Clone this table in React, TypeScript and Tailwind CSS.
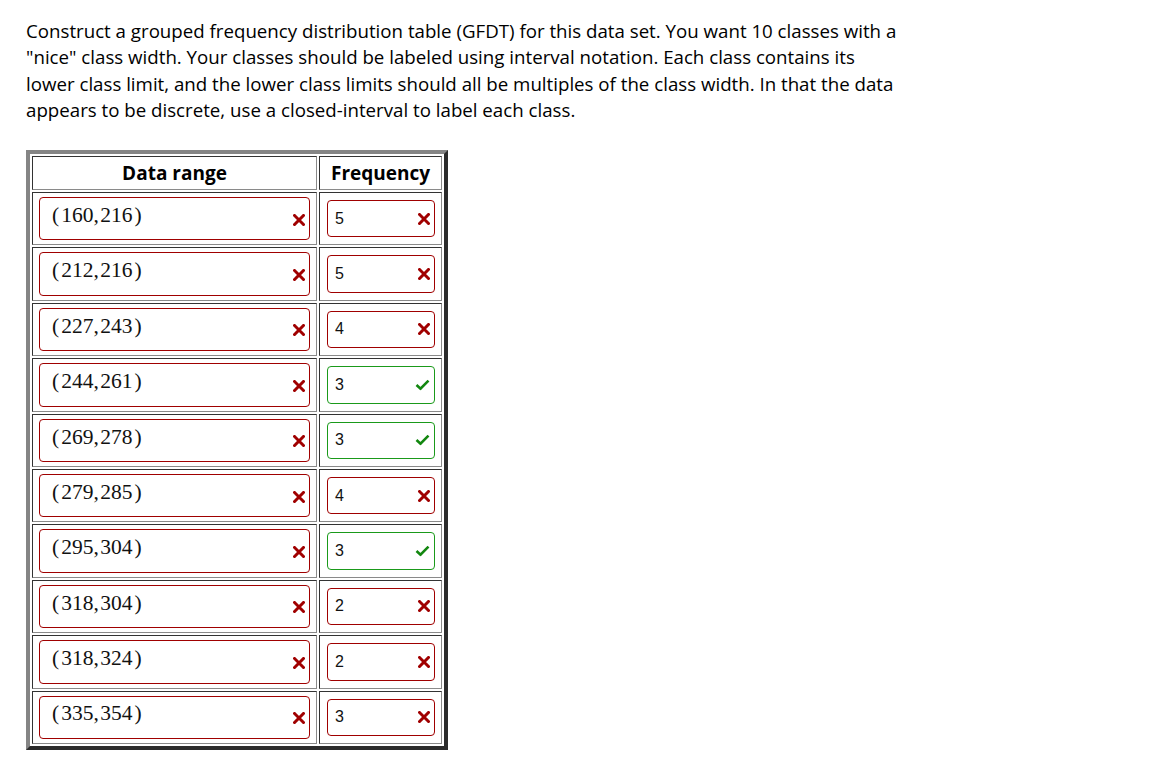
import React from "react";

type Row = { a: string; b: string; freq: string; ok: boolean };

const rows: Row[] = [
  { a: "160", b: "216", freq: "5", ok: false },
  { a: "212", b: "216", freq: "5", ok: false },
  { a: "227", b: "243", freq: "4", ok: false },
  { a: "244", b: "261", freq: "3", ok: true },
  { a: "269", b: "278", freq: "3", ok: true },
  { a: "279", b: "285", freq: "4", ok: false },
  { a: "295", b: "304", freq: "3", ok: true },
  { a: "318", b: "304", freq: "2", ok: false },
  { a: "318", b: "324", freq: "2", ok: false },
  { a: "335", b: "354", freq: "3", ok: false },
];

function XMark() {
  return (
    <svg width="12" height="12" viewBox="0 0 12 12" className="block">
      <path d="M1.5 1.5 L10.5 10.5 M10.5 1.5 L1.5 10.5" stroke="#a00000" strokeWidth="3" strokeLinecap="square" fill="none" />
    </svg>
  );
}

function Check() {
  return (
    <svg width="15" height="11" viewBox="0 0 15 11" className="block">
      <path d="M1.5 5.5 L5.5 9.2 L13.5 1.2" stroke="#12870f" strokeWidth="2.6" fill="none" />
    </svg>
  );
}

const cell =
  "border border-t-[#333333] border-l-[#333333] border-r-[#8a8a8a] border-b-[#8a8a8a] bg-white";

export default function App() {
  return (
    <div
      className="bg-white min-h-[770px] w-[1156px] pt-[18px] pl-[26px] text-black"
      style={{ fontFamily: '"Open Sans", "Liberation Sans", sans-serif' }}
    >
      <div className="text-[18.7px] leading-[26.4px]">
        <div className="whitespace-nowrap">
          Construct a grouped frequency distribution table (GFDT) for this data set. You want 10 classes with a
        </div>
        <div className="whitespace-nowrap">
          "nice" class width. Your classes should be labeled using interval notation. Each class contains its
        </div>
        <div className="whitespace-nowrap">
          lower class limit, and the lower class limits should all be multiples of the class width. In that the data
        </div>
        <div className="whitespace-nowrap">
          appears to be discrete, use a closed-interval to label each class.
        </div>
      </div>

      <div className="mt-[26.4px] w-[422px] border-[4px] border-t-[#858585] border-l-[#858585] border-r-[#2b2b2b] border-b-[#2b2b2b] p-[2px]">
        <div className="grid grid-cols-[285px_123px] grid-rows-[34px_repeat(10,53.4px)] gap-[2px]">
          <div className={`${cell} flex items-center justify-center font-bold text-[19px]`}>Data range</div>
          <div className={`${cell} flex items-center justify-center font-bold text-[19px]`}>Frequency</div>
          {rows.map((r, i) => (
            <React.Fragment key={i}>
              <div className={`${cell} flex items-center pl-[6px]`}>
                <div className="relative w-[271px] h-[43.4px] rounded-[4px] border border-[#a00000] bg-white flex items-center pl-[12px] pb-[6px]">
                  <span
                    className="text-[21.5px] leading-none text-[#111]"
                    style={{ fontFamily: '"Liberation Serif", "DejaVu Serif", serif' }}
                  >
                    <span className="mr-[2px]">(</span>
                    {r.a}
                    <span className="mr-[1.5px]">,</span>
                    {r.b}
                    <span className="ml-[2px]">)</span>
                  </span>
                  <div className="absolute right-[4px] top-1/2 -translate-y-1/2 mt-[1px]">
                    <XMark />
                  </div>
                </div>
              </div>
              <div className={`${cell} flex items-center pl-[7px]`}>
                <div
                  className={`relative w-[108px] h-[37.4px] rounded-[4px] border bg-white flex items-center pl-[7px] ${
                    r.ok ? "border-[#1a9a1a]" : "border-[#a00000]"
                  }`}
                >
                  <span
                    className="text-[16px] leading-none text-[#111]"
                    style={{ fontFamily: '"Liberation Sans", Arial, sans-serif' }}
                  >
                    {r.freq}
                  </span>
                  <div className="absolute right-[4px] top-1/2 -translate-y-1/2">
                    {r.ok ? <Check /> : <XMark />}
                  </div>
                </div>
              </div>
            </React.Fragment>
          ))}
        </div>
      </div>
    </div>
  );
}
